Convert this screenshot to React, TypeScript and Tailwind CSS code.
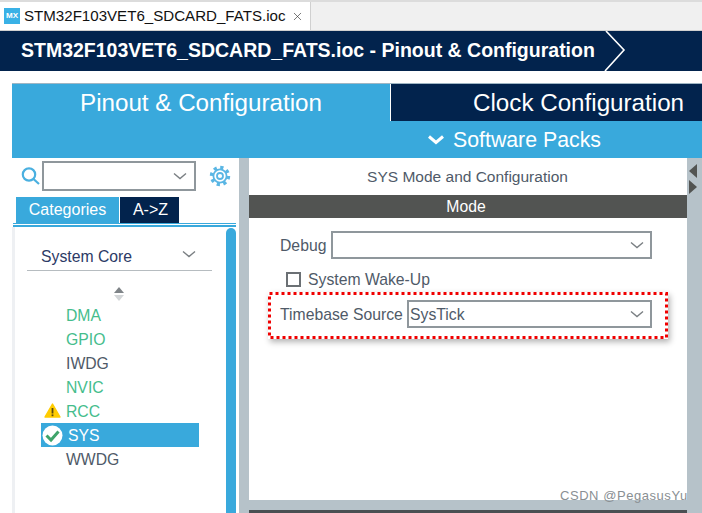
import { X } from "lucide-react";

const sans = "font-['Liberation_Sans',Arial,sans-serif]";

function Caret({ className }: { className?: string }) {
  return (
    <svg width="14" height="8" viewBox="0 0 14 8" fill="none" className={className}>
      <path d="M1 1.5 L7 6.5 L13 1.5" stroke="#7a7f83" strokeWidth="1.4" />
    </svg>
  );
}

function Dropdown({ value, width }: { value?: string; width: string }) {
  return (
    <div className={["h-[28px] border-2 border-[#8f979c] bg-white flex items-center justify-between pl-[1px] pr-[6px]", width].join(" ")}>
      <span className="text-[15.75px] text-[#4f5a68] leading-none pt-[2px]">{value}</span>
      <Caret />
    </div>
  );
}

function PeripheralRow({ label, color, icon, active }: { label: string; color: string; icon?: "warn" | "ok"; active?: boolean }) {
  return (
    <div className={["relative h-[24px] flex items-center w-[158px] text-[15.75px] leading-none pt-[2px]", active ? "bg-[#39a9dc] pl-[27px]" : "pl-[25px]", color].join(" ")}>
      {icon === "warn" && (
        <svg width="17" height="15" viewBox="0 0 17 15" className="absolute left-[3px] top-[4px]">
          <path d="M8.5 1 L16 14 H1 Z" fill="#ffcc00" stroke="#ffcc00" strokeWidth="1.4" strokeLinejoin="round" />
          <rect x="7.6" y="5" width="1.8" height="5.5" fill="#5a4a10" />
          <rect x="7.6" y="11.4" width="1.8" height="1.8" fill="#5a4a10" />
        </svg>
      )}
      {icon === "ok" && (
        <svg width="21" height="21" viewBox="0 0 21 21" className="absolute left-[1px] top-[2px]">
          <circle cx="10.5" cy="10.5" r="10" fill="#ffffff" />
          <path d="M4.5 10.5 L9 15 L16.5 6.5" fill="none" stroke="#3fa46a" strokeWidth="3" />
        </svg>
      )}
      {label}
    </div>
  );
}

export default function App() {
  return (
    <div className={["relative w-[702px] h-[513px] overflow-hidden bg-white flex flex-col", sans].join(" ")}>
      {/* file tab strip */}
      <div className="h-[31px] shrink-0 bg-[#f0f0f0] border-t-2 border-[#dcdcdc] border-b border-b-[#d0d0d0] flex">
        <div className="w-[311px] bg-white border-r border-[#d0d0d0] flex items-center pl-[4px]">
          <div className="w-[16px] h-[16px] bg-[#39b1e6] text-white text-[8px] font-bold flex items-center justify-center leading-none">MX</div>
          <span className="ml-[4px] text-[15.1px] text-[#111] leading-none whitespace-nowrap">STM32F103VET6_SDCARD_FATS.ioc</span>
          <X size={13} strokeWidth={1.2} className="ml-[6px] text-[#333]" />
        </div>
      </div>

      {/* breadcrumb */}
      <div className="relative h-[40px] shrink-0 bg-[#02234d] flex items-center pl-[21px]">
        <span className="text-white font-bold text-[19.5px] leading-none whitespace-nowrap -mt-[1px]">STM32F103VET6_SDCARD_FATS.ioc - Pinout &amp; Configuration</span>
        <svg width="24" height="40" viewBox="0 0 24 40" fill="none" className="absolute left-[603px] top-0">
          <path d="M3 0 L21 19 L2 40" stroke="#ffffff" strokeWidth="1.6" />
        </svg>
      </div>

      <div className="pl-[12px] pt-[12px] flex-1 flex flex-col min-h-0">
        {/* main tabs */}
        <div className="h-[38px] shrink-0 flex bg-[#39a9dc] border-t border-[#9fb6c4]">
          <div className="w-[378px] flex items-center pl-[68px] pt-[2px] text-white text-[24.2px] leading-none">Pinout &amp; Configuration</div>
          <div className="flex-1 bg-[#02234d] border-l border-white flex items-center pl-[82px] pt-[2px] text-white text-[24.2px] leading-none whitespace-nowrap overflow-hidden">Clock Configuration</div>
        </div>
        <div className="h-[37px] shrink-0 bg-[#39a9dc] flex items-center pl-[416px] text-white text-[21.3px] leading-none">
          <svg width="16" height="10" viewBox="0 0 16 10" fill="none" className="mr-[9px]">
            <path d="M1 1.5 L8 7.5 L15 1.5" stroke="#ffffff" strokeWidth="3" />
          </svg>
          <span className="pt-[2px]">Software Packs</span>
        </div>

        <div className="flex-1 flex min-h-0">
          {/* left panel */}
          <div className="w-[227px] shrink-0 flex flex-col">
            <div className="h-[39px] shrink-0 flex items-start pt-[3px] pl-[9px]">
              <svg width="19" height="18" viewBox="0 0 19 18" fill="none" className="mt-[6px] shrink-0">
                <circle cx="8" cy="7.5" r="6.2" stroke="#4ab0e0" strokeWidth="2.2" />
                <path d="M12.5 12 L18 17" stroke="#4ab0e0" strokeWidth="2.2" />
              </svg>
              <div className="ml-[2px] w-[154px] h-[30px] border-2 border-[#8f979c] flex items-center justify-end pr-[7px]">
                <Caret />
              </div>
              <svg width="22" height="22" viewBox="0 0 22 22" fill="none" className="ml-[13px] mt-[4px] shrink-0">
                <circle cx="11" cy="11" r="8.5" stroke="#5ab6e4" strokeWidth="3.4" strokeDasharray="3.2 3.47" />
                <circle cx="11" cy="11" r="6.6" stroke="#5ab6e4" strokeWidth="1.8" />
                <circle cx="11" cy="11" r="3" stroke="#5ab6e4" strokeWidth="1.8" />
              </svg>
            </div>
            <div className="flex pl-[4px] h-[26px] shrink-0 text-[16px] text-white leading-none">
              <div className="w-[103px] bg-[#39a9dc] flex items-center justify-center">Categories</div>
              <div className="ml-[1px] w-[59px] bg-[#02234d] flex items-center justify-center pl-[2px]">A-&gt;Z</div>
            </div>
            <div className="h-[4px] shrink-0 ml-[1px] w-[223px] border-t border-b-[2px] border-[#39a9dc]" />
            <div className="flex-1 flex min-h-0">
              <div className="w-[3px] shrink-0 bg-[#eef0f3]" />
              <div className="flex-1 pl-[12px] flex flex-col">
                <div className="w-[185px] h-[44px] shrink-0 flex items-end justify-between pb-[5px] pl-[14px] pr-[16px] border-b border-[#b6bcc0]">
                  <span className="text-[15.75px] text-[#2c3a66] leading-none">System Core</span>
                  <Caret className="mb-[7px]" />
                </div>
                <div className="h-[32px] shrink-0 pl-[87px] pt-[16px]">
                  <svg width="10" height="14" viewBox="0 0 10 14" className="block">
                    <path d="M5 0 L10 6 H0 Z" fill="#7f8488" />
                    <path d="M0 8 H10 L5 14 Z" fill="#d3d6d8" />
                  </svg>
                </div>
                <div className="ml-[14px] flex flex-col">
                  <PeripheralRow label="DMA" color="text-[#45bd8c]" />
                  <PeripheralRow label="GPIO" color="text-[#45bd8c]" />
                  <PeripheralRow label="IWDG" color="text-[#4f5a68]" />
                  <PeripheralRow label="NVIC" color="text-[#45bd8c]" />
                  <PeripheralRow label="RCC" color="text-[#45bd8c]" icon="warn" />
                  <PeripheralRow label="SYS" color="text-white" icon="ok" active />
                  <PeripheralRow label="WWDG" color="text-[#4f5a68]" />
                </div>
              </div>
              <div className="w-[10px] shrink-0 mr-[3px] mt-[1px] bg-[#39a9dc] rounded-t-[5px]" />
            </div>
          </div>

          {/* divider */}
          <div className="w-[10px] shrink-0 bg-[#b6c2c9]" />

          {/* right panel */}
          <div className="w-[438px] shrink-0 flex flex-col">
            <div className="h-[37px] shrink-0 flex items-center justify-center text-[15.5px] text-[#4f5a68] leading-none pr-[1px]">SYS Mode and Configuration</div>
            <div className="h-[23px] shrink-0 bg-[#525452] flex items-center justify-center text-white text-[15.75px] leading-none pr-[4px]">Mode</div>
            <div className="flex-1 flex flex-col pt-[13px]">
              <div className="flex items-center pl-[31px]">
                <span className="w-[51px] text-[15.75px] text-[#4f5a68] leading-none pt-[2px]">Debug</span>
                <Dropdown width="w-[321px]" />
              </div>
              <div className="flex items-center pl-[37px] mt-[13px] h-[15px]">
                <div className="w-[15px] h-[15px] border-2 border-[#6b7074] bg-white" />
                <span className="ml-[7px] text-[15.75px] text-[#4f5a68] leading-none">System Wake-Up</span>
              </div>
              <div className="relative ml-[19px] mt-[5px] w-[400px] h-[47px] flex items-center pl-[12px] pb-[3px] shadow-[2px_3px_6px_rgba(0,0,0,0.3)]">
                <span className="w-[127px] text-[15.75px] text-[#4f5a68] leading-none whitespace-nowrap pt-[2px]">Timebase Source</span>
                <Dropdown value="SysTick" width="w-[245px]" />
                <svg width="400" height="47" className="absolute left-0 top-0">
                  <rect x="1.5" y="1.5" width="397" height="44" fill="none" stroke="#f00000" strokeWidth="3" strokeDasharray="3 3" />
                </svg>
              </div>
            </div>
            <div className="h-[10px] shrink-0 bg-[#b6c2c9]" />
            <div className="h-[3px] shrink-0 bg-[#4a4f52]" />
          </div>

          {/* right strip */}
          <div className="flex-1 bg-[#b6c2c9] flex flex-col pt-[6px] pl-[2px] gap-[2px]">
            <svg width="8" height="14" viewBox="0 0 8 14"><path d="M8 0 V14 L0 7 Z" fill="#525452" /></svg>
            <svg width="8" height="14" viewBox="0 0 8 14"><path d="M0 0 V14 L8 7 Z" fill="#525452" /></svg>
          </div>
        </div>
      </div>

      {/* watermark */}
      <div className="absolute left-[560px] top-[488px] text-[13px] leading-[15px] tracking-[0.55px] text-[#8a8f93] whitespace-nowrap">CSDN @PegasusYu</div>
    </div>
  );
}
